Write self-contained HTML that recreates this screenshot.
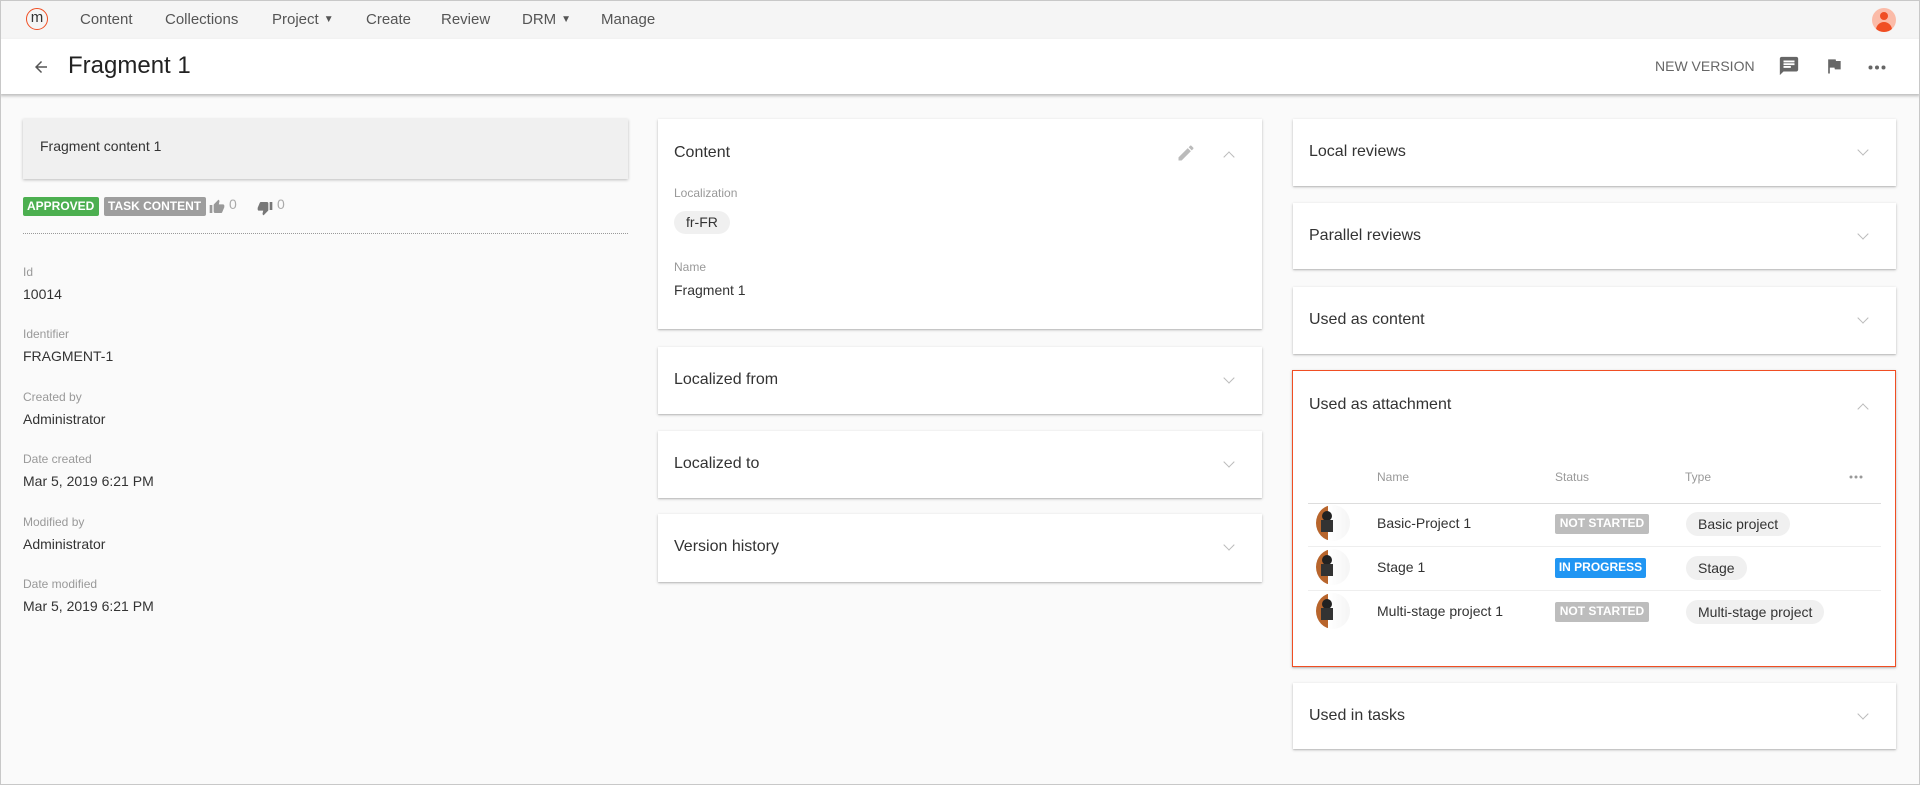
<!DOCTYPE html>
<html><head><meta charset="utf-8"><style>
*{box-sizing:border-box;margin:0;padding:0}
body{width:1920px;height:785px;background:#fafafa;font-family:"Liberation Sans",sans-serif;color:#333;position:relative;overflow:hidden}
.frame{position:absolute;left:0;top:0;width:1920px;height:785px;border:1px solid #c8c8c8;pointer-events:none;z-index:9}
.a{position:absolute;white-space:nowrap}
.nav{position:absolute;left:0;top:0;width:1920px;height:39px;background:#f5f5f5}
.nav .a{top:11px;font-size:15px;color:#555}
.nav .a small{font-size:10px;margin-left:5px;vertical-align:2px}
.hdr{position:absolute;left:0;top:39px;width:1920px;height:55px;background:#fff;box-shadow:0 2px 3px rgba(0,0,0,.25)}
.card{position:absolute;background:#fff;box-shadow:0 1px 3px rgba(0,0,0,.2),0 1px 1px rgba(0,0,0,.12)}
.ct{position:absolute;left:16px;font-size:16px;color:#333}
.chev{position:absolute;width:8px;height:8px;border-right:1.3px solid #bbb;border-bottom:1.3px solid #bbb;transform:rotate(45deg)}
.up{transform:rotate(225deg)}
.lbl{font-size:12px;color:#999}
.val{font-size:14px;color:#333}
.badge{position:absolute;height:19px;color:#fff;font-size:12px;font-weight:bold;line-height:19px;padding:0 4px;border-radius:2px;white-space:nowrap;overflow:hidden}
.chip{position:absolute;height:24px;line-height:24px;background:#f0f0f0;border-radius:12px;padding:0 12px;font-size:14px;color:#333;white-space:nowrap}
.av{position:absolute;width:34px;height:36px;border-radius:50%;background:linear-gradient(90deg,#b8652c 0,#b8652c 35%,#fff 36%,#f5f5f5 100%);overflow:hidden}
.av:before{content:"";position:absolute;left:6px;top:6px;width:10px;height:10px;border-radius:50%;background:#222}
.av:after{content:"";position:absolute;left:5px;top:15px;width:12px;height:12px;background:#333}
</style></head><body>
<div class="nav">
 <div class="a" style="left:26px;top:8px;width:22px;height:22px;border:1.5px solid #f04e23;border-radius:50%;font-size:15px;text-align:center;line-height:18px;color:#333">m</div>
 <div class="a" style="left:80px">Content</div>
 <div class="a" style="left:165px">Collections</div>
 <div class="a" style="left:272px">Project<small>▼</small></div>
 <div class="a" style="left:366px">Create</div>
 <div class="a" style="left:441px">Review</div>
 <div class="a" style="left:522px">DRM<small>▼</small></div>
 <div class="a" style="left:601px">Manage</div>
 <div class="a" style="left:1872px;top:8px;width:24px;height:24px;border-radius:50%;background:#fbbba8;overflow:hidden">
  <div style="position:absolute;left:8px;top:4px;width:8px;height:8px;border-radius:50%;background:#f04e23"></div>
  <div style="position:absolute;left:4px;top:14px;width:16px;height:12px;border-radius:8px 8px 0 0;background:#f04e23"></div></div>
</div>
<div class="hdr">
 <svg class="a" style="left:32px;top:19px" width="18" height="18" viewBox="0 0 24 24"><path d="M20 11H7.8l5.6-5.6L12 4l-8 8 8 8 1.4-1.4L7.8 13H20z" fill="#555"/></svg>
 <div class="a" style="left:68px;top:13px;font-size:24px;color:#222">Fragment 1</div>
 <div class="a" style="left:1655px;top:19px;font-size:14px;color:#666">NEW VERSION</div>
 <svg class="a" style="left:1778px;top:16px" width="22" height="22" viewBox="0 0 24 24"><path d="M20 2H4c-1.1 0-2 .9-2 2v18l4-4h14c1.1 0 2-.9 2-2V4c0-1.1-.9-2-2-2zM6 9h12v2H6zm8 5H6v-2h8zm4-6H6V6h12z" fill="#666"/></svg>
 <svg class="a" style="left:1824px;top:17px" width="20" height="20" viewBox="0 0 24 24"><path d="M14.4 6L14 4H5v17h2v-7h5.6l.4 2h7V6z" fill="#666"/></svg>
 <svg class="a" style="left:1868px;top:26px" width="18" height="5" viewBox="0 0 18 5"><circle cx="2.5" cy="2.5" r="2" fill="#666"/><circle cx="9" cy="2.5" r="2" fill="#666"/><circle cx="15.5" cy="2.5" r="2" fill="#666"/></svg>
</div>

<!-- left -->
<div class="a" style="left:23px;top:119px;width:605px;height:60px;background:#f0f0f0;box-shadow:0 1px 3px rgba(0,0,0,.25)"></div>
<div class="a val" style="left:40px;top:138px;font-size:14px">Fragment content 1</div>
<div class="badge" style="left:23px;top:197px;background:#4caf50;width:76px">APPROVED</div>
<div class="badge" style="left:104px;top:197px;background:#9e9e9e;width:102px">TASK CONTENT</div>
<svg class="a" style="left:209px;top:199px" width="16" height="16" viewBox="0 0 24 24"><path d="M1 21h4V9H1zm22-11c0-1.1-.9-2-2-2h-6.3l1-4.6v-.3c0-.4-.2-.8-.4-1.1L14.2 1 7.6 7.6C7.2 7.9 7 8.4 7 9v10c0 1.1.9 2 2 2h9c.8 0 1.5-.5 1.8-1.2l3-7.1c.1-.2.2-.5.2-.7z" fill="#999"/></svg>
<div class="a" style="left:229px;top:196px;font-size:14px;color:#aaa">0</div>
<svg class="a" style="left:257px;top:200px" width="16" height="16" viewBox="0 0 24 24"><path d="M15 3H6c-.8 0-1.5.5-1.8 1.2l-3 7.1c-.1.2-.2.5-.2.7v2c0 1.1.9 2 2 2h6.3l-1 4.6v.3c0 .4.2.8.4 1.1L9.8 23l6.6-6.6c.4-.4.6-.9.6-1.4V5c0-1.1-.9-2-2-2zm4 0v12h4V3z" fill="#777"/></svg>
<div class="a" style="left:277px;top:196px;font-size:14px;color:#aaa">0</div>
<div class="a" style="left:23px;top:233px;width:605px;border-top:1px dotted #999"></div>
<div class="a lbl" style="left:23px;top:265px">Id</div><div class="a val" style="left:23px;top:286px">10014</div>
<div class="a lbl" style="left:23px;top:327px">Identifier</div><div class="a val" style="left:23px;top:348px">FRAGMENT-1</div>
<div class="a lbl" style="left:23px;top:390px">Created by</div><div class="a val" style="left:23px;top:411px">Administrator</div>
<div class="a lbl" style="left:23px;top:452px">Date created</div><div class="a val" style="left:23px;top:473px">Mar 5, 2019 6:21 PM</div>
<div class="a lbl" style="left:23px;top:515px">Modified by</div><div class="a val" style="left:23px;top:536px">Administrator</div>
<div class="a lbl" style="left:23px;top:577px">Date modified</div><div class="a val" style="left:23px;top:598px">Mar 5, 2019 6:21 PM</div>

<!-- middle -->
<div class="card" style="left:658px;top:119px;width:604px;height:210px">
 <div class="ct" style="top:25px">Content</div>
 <svg class="a" style="left:518px;top:24px" width="20" height="20" viewBox="0 0 24 24"><path d="M3 17.25V21h3.75L17.8 9.9l-3.7-3.7zM20.7 7c.4-.4.4-1 0-1.4l-2.3-2.3c-.4-.4-1-.4-1.4 0l-1.8 1.8 3.7 3.7z" fill="#bbb"/></svg>
 <div class="chev up" style="left:567px;top:34px"></div>
 <div class="a lbl" style="left:16px;top:67px">Localization</div>
 <div class="chip" style="left:16px;top:92px;height:23px;line-height:23px">fr-FR</div>
 <div class="a lbl" style="left:16px;top:141px">Name</div>
 <div class="a val" style="left:16px;top:163px">Fragment 1</div>
</div>
<div class="card" style="left:658px;top:347px;width:604px;height:67px"><div class="ct" style="top:24px">Localized from</div><div class="chev" style="left:567px;top:27px"></div></div>
<div class="card" style="left:658px;top:431px;width:604px;height:67px"><div class="ct" style="top:24px">Localized to</div><div class="chev" style="left:567px;top:27px"></div></div>
<div class="card" style="left:658px;top:514px;width:604px;height:68px"><div class="ct" style="top:24px">Version history</div><div class="chev" style="left:567px;top:27px"></div></div>

<!-- right -->
<div class="card" style="left:1293px;top:119px;width:603px;height:67px"><div class="ct" style="top:24px">Local reviews</div><div class="chev" style="left:566px;top:27px"></div></div>
<div class="card" style="left:1293px;top:203px;width:603px;height:66px"><div class="ct" style="top:24px">Parallel reviews</div><div class="chev" style="left:566px;top:27px"></div></div>
<div class="card" style="left:1293px;top:287px;width:603px;height:67px"><div class="ct" style="top:24px">Used as content</div><div class="chev" style="left:566px;top:27px"></div></div>
<div class="card" style="left:1292px;top:370px;width:604px;height:297px;border:1px solid #f04e23">
 <div class="ct" style="top:25px">Used as attachment</div><div class="chev up" style="left:566px;top:34px"></div>
 <div class="a lbl" style="left:84px;top:99px">Name</div>
 <div class="a lbl" style="left:262px;top:99px">Status</div>
 <div class="a lbl" style="left:392px;top:99px">Type</div>
 <svg class="a" style="left:556px;top:104px" width="14" height="4" viewBox="0 0 14 4"><circle cx="2" cy="2" r="1.5" fill="#999"/><circle cx="7" cy="2" r="1.5" fill="#999"/><circle cx="12" cy="2" r="1.5" fill="#999"/></svg>
 <div class="a" style="left:15px;top:132px;width:573px;border-top:1px solid #ddd"></div>
 <div class="a" style="left:15px;top:175px;width:573px;border-top:1px solid #eee"></div>
 <div class="a" style="left:15px;top:219px;width:573px;border-top:1px solid #eee"></div>

 <div class="av" style="left:23px;top:134px"></div>
 <div class="a val" style="left:84px;top:144px">Basic-Project 1</div>
 <div class="badge" style="left:262px;top:143px;background:#bdbdbd;width:94px;height:20px;text-align:center;padding:0">NOT STARTED</div>
 <div class="chip" style="left:393px;top:141px">Basic project</div>

 <div class="av" style="left:23px;top:178px"></div>
 <div class="a val" style="left:84px;top:188px">Stage 1</div>
 <div class="badge" style="left:262px;top:187px;background:#2196f3;width:91px;height:20px;text-align:center;padding:0">IN PROGRESS</div>
 <div class="chip" style="left:393px;top:185px">Stage</div>

 <div class="av" style="left:23px;top:222px"></div>
 <div class="a val" style="left:84px;top:232px">Multi-stage project 1</div>
 <div class="badge" style="left:262px;top:231px;background:#bdbdbd;width:94px;height:20px;text-align:center;padding:0">NOT STARTED</div>
 <div class="chip" style="left:393px;top:229px">Multi-stage project</div>
</div>
<div class="card" style="left:1293px;top:683px;width:603px;height:66px"><div class="ct" style="top:24px">Used in tasks</div><div class="chev" style="left:566px;top:27px"></div></div>
<div class="frame"></div>
</body></html>
